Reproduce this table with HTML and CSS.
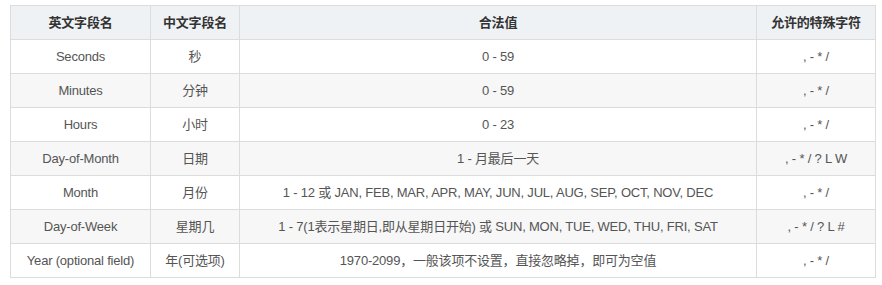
FILE: index.html
```html
<!DOCTYPE html>
<html>
<head>
<meta charset="utf-8">
<link rel="stylesheet" href="styles.css">
</head>
<body>
<table class="cron">
  <colgroup>
    <col class="c1"><col class="c2"><col class="c3"><col class="c4">
  </colgroup>
  <thead>
    <tr><th>英文字段名</th><th>中文字段名</th><th>合法值</th><th>允许的特殊字符</th></tr>
  </thead>
  <tbody>
    <tr><td>Seconds</td><td>秒</td><td>0 - 59</td><td>, - * /</td></tr>
    <tr><td>Minutes</td><td>分钟</td><td>0 - 59</td><td>, - * /</td></tr>
    <tr><td>Hours</td><td>小时</td><td>0 - 23</td><td>, - * /</td></tr>
    <tr><td>Day-of-Month</td><td>日期</td><td>1 - 月最后一天</td><td>, - * / ? L W</td></tr>
    <tr><td>Month</td><td>月份</td><td>1 - 12 或 JAN, FEB, MAR, APR, MAY, JUN, JUL, AUG, SEP, OCT, NOV, DEC</td><td>, - * /</td></tr>
    <tr><td>Day-of-Week</td><td>星期几</td><td>1 - 7(1表示星期日,即从星期日开始) 或 SUN, MON, TUE, WED, THU, FRI, SAT</td><td>, - * / ? L #</td></tr>
    <tr><td>Year (optional field)</td><td>年(可选项)</td><td>1970-2099，一般该项不设置，直接忽略掉，即可为空值</td><td>, - * /</td></tr>
  </tbody>
</table>
</body>
</html>
```
FILE: styles.css
```css
html, body {
  margin: 0;
  padding: 0;
  background: #fff;
}
body {
  padding: 5px 0 0 10px;
  font-family: "Liberation Sans", Arial, "Noto Sans CJK SC", sans-serif;
  font-size: 13px;
  letter-spacing: -0.2px;
  color: #555;
}
.cron {
  border-collapse: collapse;
  width: 865px;
  table-layout: fixed;
}
.c1 { width: 140px; }
.c2 { width: 89px; }
.c3 { width: 517px; }
.c4 { width: 119px; }
.cron th, .cron td {
  border: 1px solid #dcdcdc;
  height: 34px;
  padding: 1px 8px 0;
  text-align: center;
  vertical-align: middle;
  white-space: nowrap;
  box-sizing: border-box;
  line-height: 20px;
}
.cron th {
  background: #eff2f5;
  color: #333;
  font-weight: bold;
}
.cron tbody tr:nth-child(even) td {
  background: #f7f7f7;
}
```
